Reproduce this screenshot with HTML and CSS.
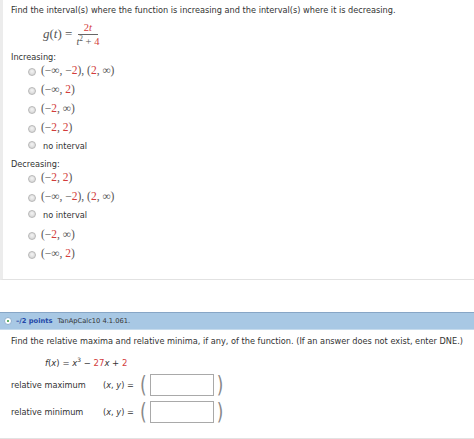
FILE: index.html
```html
<!DOCTYPE html>
<html lang="en">
<head>
    <meta charset="UTF-8">
    <title>Relative extrema</title>
    <link rel="stylesheet" href="styles.css">
</head>
<body>
    <div class="question top">
        <p class="prompt">Find the interval(s) where the function is increasing and the interval(s) where it is decreasing.</p>

        <div class="formula">
            <span class="math"><i>g</i>(<i>t</i>) =</span>
            <span class="frac">
                <span class="num-part red"><span>2</span><i>t</i></span>
                <span class="den-part"><i>t</i><sup>2</sup> + <span class="red">4</span></span>
            </span>
        </div>

        <div class="group-label">Increasing:</div>
        <ul class="choices">
            <li><span class="radio"></span><span class="math">(−∞, −<span class="red">2</span>), (<span class="red">2</span>, ∞)</span></li>
            <li><span class="radio"></span><span class="math">(−∞, <span class="red">2</span>)</span></li>
            <li><span class="radio"></span><span class="math">(−<span class="red">2</span>, ∞)</span></li>
            <li><span class="radio"></span><span class="math">(−<span class="red">2</span>, <span class="red">2</span>)</span></li>
            <li><span class="radio"></span><span class="plain">no interval</span></li>
        </ul>

        <div class="group-label">Decreasing:</div>
        <ul class="choices">
            <li><span class="radio"></span><span class="math">(−<span class="red">2</span>, <span class="red">2</span>)</span></li>
            <li><span class="radio"></span><span class="math">(−∞, −<span class="red">2</span>), (<span class="red">2</span>, ∞)</span></li>
            <li><span class="radio"></span><span class="plain">no interval</span></li>
            <li><span class="radio"></span><span class="math">(−<span class="red">2</span>, ∞)</span></li>
            <li><span class="radio"></span><span class="math">(−∞, <span class="red">2</span>)</span></li>
        </ul>
    </div>

    <div class="question bottom">
        <div class="q-header">
            <span class="dot"></span>
            <span class="points">–/2 points</span>
            <span class="ref">TanApCalc10 4.1.061.</span>
        </div>
        <div class="q-body">
            <p class="prompt">Find the relative maxima and relative minima, if any, of the function. (If an answer does not exist, enter DNE.)</p>
            <p class="func"><i>f</i>(<i>x</i>) = <i>x</i><sup>3</sup> − <span class="red">27</span><i>x</i> + <span class="red">2</span></p>

            <div class="answer-row">
                <span class="answer-label">relative maximum</span>
                <span class="xy">(<i>x</i>, <i>y</i>) =</span>
                <span class="paren">(</span>
                <span class="answer-box"></span>
                <span class="paren">)</span>
            </div>
            <div class="answer-row">
                <span class="answer-label">relative minimum</span>
                <span class="xy">(<i>x</i>, <i>y</i>) =</span>
                <span class="paren">(</span>
                <span class="answer-box"></span>
                <span class="paren">)</span>
            </div>
        </div>
    </div>
</body>
</html>
```

FILE: styles.css
```css
body {
    margin: 0;
    font-family: "DejaVu Sans", Verdana, sans-serif;
    font-size: 8.2px;
    color: #333;
    background-color: #fff;
}

p {
    margin: 0;
}

.red {
    color: #d23c3c;
}

.question.top {
    border-left: 3px solid #ececec;
    border-bottom: 1px solid #e2e2e2;
    padding: 4px 10px 17px 8px;
}

.prompt {
    line-height: 12px;
    white-space: nowrap;
}

.formula {
    display: flex;
    align-items: center;
    height: 28px;
    margin-top: 4px;
    padding-left: 32px;
}

.math {
    font-family: "Liberation Serif", "Times New Roman", serif;
    font-size: 11.5px;
    color: #555;
}

.formula .math {
    font-size: 13px;
    margin-right: 3px;
}

.frac {
    display: inline-flex;
    flex-direction: column;
    align-items: center;
    font-family: "Liberation Serif", serif;
    font-size: 10.5px;
    color: #555;
    line-height: 11px;
}

.num-part {
    padding: 0 6px 1px;
    border-bottom: 1px solid #666;
}

.den-part {
    padding: 1px 1px 0;
}

.frac sup, .func sup {
    font-size: 70%;
    line-height: 0;
}

.group-label {
    line-height: 12px;
    margin-top: 3px;
}

.choices {
    list-style: none;
    margin: -3px 0 0;
    padding: 0 0 0 17px;
}

.choices li {
    display: flex;
    align-items: center;
    height: 19px;
}

.radio {
    width: 6px;
    height: 6px;
    border-radius: 50%;
    border: 1px solid #b8b8b8;
    background: radial-gradient(circle at 50% 40%, #f4f4f4, #cfcfcf);
    margin-right: 5px;
    position: relative;
    top: 2px;
}

.choices .plain {
    margin-left: 2px;
}

li:has(.plain) .radio {
    top: -1px;
}

.question.bottom {
    margin-top: 32px;
    border-bottom: 1px solid #e2e2e2;
}

.q-header {
    display: flex;
    align-items: center;
    height: 16px;
    background-color: #a8c8e4;
    border-top: 1px solid #87a6c6;
    border-bottom: 1px solid #c6dbec;
    padding-left: 4px;
    font-size: 6.7px;
}

.dot {
    width: 6px;
    height: 6px;
    border-radius: 50%;
    background: #fff;
    border: 1px solid #8fb0cf;
    position: relative;
    margin-right: 4px;
}

.dot::after {
    content: "";
    position: absolute;
    left: 2px;
    top: 2px;
    width: 2px;
    height: 2px;
    border-radius: 50%;
    background: #2f9a3a;
}

.points {
    font-weight: bold;
    color: #2548a8;
    margin-right: 5px;
}

.ref {
    color: #333;
}

.q-body {
    padding: 5px 10px 15px 11px;
}

.func {
    line-height: 12px;
    margin-top: 10px;
    padding-left: 34px;
    font-size: 8.5px;
}

.answer-row {
    display: flex;
    align-items: center;
    height: 22px;
    margin-top: 5px;
}

.answer-label {
    width: 92px;
}

.xy {
    width: 34px;
}

.paren {
    font-size: 17px;
    line-height: 18px;
    color: #888;
    transform: scaleY(1.3);
    margin: 0 3px;
}

.answer-box {
    width: 62px;
    height: 20px;
    border: 1px solid #a9a9a9;
    background-color: #fff;
}
```
